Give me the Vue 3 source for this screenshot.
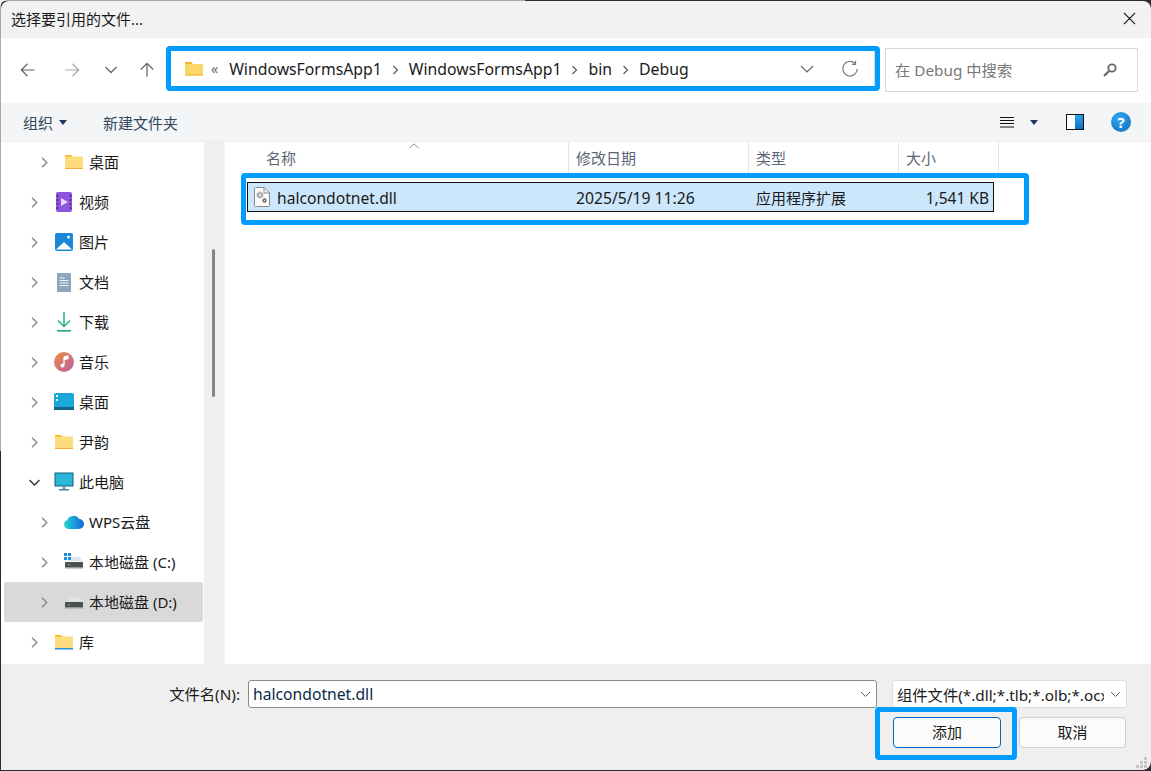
<template>
  <div class="dialog">
    <header class="titlebar">
      <span class="title">选择要引用的文件...</span>
      <svg class="close" width="13" height="13" viewBox="0 0 14 14"><path d="M1 1l12 12M13 1L1 13" stroke="#111" stroke-width="1.200" fill="none" /></svg>
    </header>

    <div class="navbar">
      <div class="nav-buttons">
        <svg width="16" height="16" viewBox="0 0 18 18"><path d="M16.500 9H1.500M8.500 2L1.500 9l7 7" stroke="#666" stroke-width="1.400" fill="none" /></svg>
        <svg width="16" height="16" viewBox="0 0 18 18"><path d="M1.500 9h15M9.500 2l7 7-7 7" stroke="#aaa" stroke-width="1.400" fill="none" /></svg>
        <svg width="14" height="16" viewBox="0 0 14 16"><path d="M1.500 5L7 10.500 12.500 5" stroke="#666" stroke-width="1.300" fill="none" /></svg>
        <svg width="16" height="16" viewBox="0 0 18 18"><path d="M9 16.500V1.500M2 8.500l7-7 7 7" stroke="#666" stroke-width="1.400" fill="none" /></svg>
      </div>
      <div class="address">
        <svg class="addr-folder" width="18" height="15" viewBox="0 0 18 15">
          <path d="M0 2a1 1 0 0 1 1-1h5l2 2h9a1 1 0 0 1 1 1v3H0z" fill="#f6b321" />
          <rect y="3" width="18" height="11.500" rx="1" fill="#fbd768" />
          <rect y="13.500" width="18" height="1" fill="#f2b130" />
        </svg>
        <span class="crumb-more">«</span>
        <template v-for="(c, i) in crumbs" :key="i">
          <span class="crumb">{{ c }}</span>
          <svg v-if="i < crumbs.length - 1" class="crumb-sep" width="7" height="10" viewBox="0 0 7 10"><path d="M1.500 1l4 4-4 4" stroke="#555" stroke-width="1.100" fill="none" /></svg>
        </template>
        <span class="spacer"></span>
        <svg class="addr-chevron" width="14" height="8" viewBox="0 0 14 8"><path d="M1 1l6 6 6-6" stroke="#666" stroke-width="1.200" fill="none" /></svg>
        <svg class="addr-refresh" width="18" height="18" viewBox="0 0 18 18"><path d="M13.800 3.200A7.300 7.300 0 1 0 16.300 9M14.500 0.800v3.500H11" stroke="#777" stroke-width="1.200" fill="none" /></svg>
      </div>
      <div class="search">
        <span class="search-text">在 Debug 中搜索</span>
        <svg width="16" height="16" viewBox="0 0 16 16"><circle cx="10" cy="6" r="3.700" stroke="#666" stroke-width="1.800" fill="none" /><path d="M7 9l-5 5" stroke="#666" stroke-width="2.200" /></svg>
      </div>
    </div>

    <div class="toolbar">
      <span class="tool">组织</span>
      <span class="tool-caret"></span>
      <span class="tool new-folder">新建文件夹</span>
      <span class="spacer"></span>
      <svg class="view-icon" width="14" height="13" viewBox="0 0 14 13"><path d="M0 1.500h14M0 4.500h14M0 7.500h14M0 11h14" stroke="#111" stroke-width="1" /></svg>
      <span class="tool-caret view-caret"></span>
      <span class="pane-icon"><i></i></span>
      <span class="help">?</span>
    </div>

    <div class="main">
      <aside class="sidebar">
        <div v-for="item in tree" :key="item.id" class="tree-row" :class="{ selected: item.selected, nested: item.nested }">
          <svg class="tree-arrow" width="11" height="11" viewBox="0 0 11 11">
            <path v-if="item.open" d="M0.500 3L5.500 8l5-5" stroke="#333" stroke-width="1.400" fill="none" />
            <path v-else d="M3 0.800L7.800 5.500 3 10.200" stroke="#888" stroke-width="1.400" fill="none" />
          </svg>
          <span class="tree-icon">
            <svg width="20" height="20" viewBox="0 0 20 20">
              <template v-if="item.icon === 'folder'">
                <path d="M1 4a1 1 0 0 1 1-1h5l2 2h9v3H1z" fill="#f6b321" />
                <rect x="1" y="4.500" width="18" height="12.500" rx="1" fill="#fcdc7c" />
                <rect x="1" y="16" width="18" height="1" fill="#f2b130" />
              </template>
              <template v-if="item.icon === 'library'">
                <path d="M1 4a1 1 0 0 1 1-1h5l2 2h9v3H1z" fill="#f6b321" />
                <rect x="1" y="4.500" width="18" height="12.500" rx="1" fill="#fcdc7c" />
                <rect x="1" y="16" width="18" height="1.500" fill="#2b8fd6" />
              </template>
              <template v-if="item.icon === 'video'">
                <rect x="2" y="0" width="16" height="20" rx="2" fill="#8f55dc" />
                <path d="M7 6l7 4-7 4z" fill="#e6d8fb" />
                <path d="M3.500 3v14M16.500 3v14" stroke="#4b2a8c" stroke-width="1.500" stroke-dasharray="2 2" />
              </template>
              <template v-if="item.icon === 'picture'">
                <rect x="1" y="1" width="18" height="18" rx="2" fill="#1a87d8" />
                <path d="M2 17.500L10 10l8 7.500z" fill="#fff" />
                <circle cx="14.500" cy="5" r="1.500" fill="#fff" />
              </template>
              <template v-if="item.icon === 'doc'">
                <rect x="3" y="1" width="14" height="19" rx="1" fill="#8ca6c2" />
                <path d="M5.500 6h5M5.500 8.500h9M5.500 11h9M5.500 13.500h9" stroke="#eef3f8" stroke-width="1" />
              </template>
              <template v-if="item.icon === 'download'">
                <path d="M10 0v14.500M4 8.500l6 6 6-6" stroke="#25b090" stroke-width="1.500" fill="none" />
                <rect x="3" y="18" width="14" height="1.600" fill="#1fa78c" />
              </template>
              <template v-if="item.icon === 'music'">
                <defs><linearGradient id="mus" x1="0" y1="0" x2="1" y2="1"><stop offset="0" stop-color="#ee8a3e" /><stop offset="1" stop-color="#b862a8" /></linearGradient></defs>
                <circle cx="10" cy="10" r="10" fill="url(#mus)" />
                <path d="M10 5v8M10 5l4-1v2.500l-4 1" stroke="#fff" stroke-width="1.300" fill="#fff" />
                <circle cx="8.500" cy="13.500" r="2" fill="#fff" />
              </template>
              <template v-if="item.icon === 'desktop'">
                <rect x="0" y="1" width="20" height="17" rx="2" fill="#1ba7d9" />
                <rect x="0" y="15" width="20" height="3" fill="#14638c" />
                <rect x="2" y="3" width="2" height="2" fill="#fff" />
                <rect x="2" y="7" width="2" height="2" fill="#cdeaf7" />
              </template>
              <template v-if="item.icon === 'pc'">
                <rect x="1" y="1" width="18" height="13" fill="#2ab6d6" stroke="#14607e" stroke-width="1" />
                <rect x="8.500" y="14" width="3" height="3" fill="#7a9db2" />
                <rect x="5" y="17" width="10" height="1.500" fill="#4f7d96" />
              </template>
              <template v-if="item.icon === 'cloud'">
                <defs><linearGradient id="cld" x1="0" y1="0" x2="1" y2="0"><stop offset="0" stop-color="#22d4d0" /><stop offset="1" stop-color="#1466e0" /></linearGradient></defs>
                <path d="M4.500 17a4.500 4.500 0 0 1-1.200-8.800A6.500 6.500 0 0 1 15 7a5 5 0 0 1 0 10z" fill="url(#cld)" />
              </template>
              <template v-if="item.icon === 'diskc' || item.icon === 'diskd'">
                <path d="M4 9l3-4h8l4 4.500z" fill="#dde3ea" />
                <rect x="1" y="10" width="18" height="6" rx="1" fill="#4e4e4e" />
                <rect x="1" y="15" width="18" height="1.500" fill="#9a9a9a" />
                <rect x="4" y="12" width="1.500" height="1.500" fill="#3fd04e" />
              </template>
              <template v-if="item.icon === 'diskc'">
                <rect x="0" y="1" width="3" height="3" fill="#1d8fdc" />
                <rect x="4" y="1" width="3" height="3" fill="#1d8fdc" />
                <rect x="0" y="5" width="3" height="3" fill="#1d8fdc" />
                <rect x="4" y="5" width="3" height="3" fill="#1d8fdc" />
              </template>
            </svg>
          </span>
          <span class="tree-label">{{ item.label }}</span>
        </div>
      </aside>

      <div class="scrollbar"><span class="thumb"></span></div>

      <section class="list">
        <div class="list-head">
          <div v-for="col in columns" :key="col.label" class="head-cell" :class="col.cls">{{ col.label }}</div>
          <svg class="sort-arrow" width="10" height="6" viewBox="0 0 10 6"><path d="M0.500 5L5 0.800 9.500 5" stroke="#888" stroke-width="1" fill="none" /></svg>
        </div>
        <div class="file-row">
          <span class="cell name">
            <svg width="16" height="20" viewBox="0 0 16 20">
              <path d="M0.500 1.500a1 1 0 0 1 1-1H10l5.500 5.500v12.500a1 1 0 0 1-1 1h-13a1 1 0 0 1-1-1z" fill="#fbfbfb" stroke="#8a8a8a" />
              <path d="M10 0.500V6h5.500" fill="none" stroke="#8a8a8a" />
              <circle cx="6" cy="8" r="2" fill="none" stroke="#a9aeb3" stroke-width="2" />
              <circle cx="6" cy="8" r="3.200" fill="none" stroke="#a9aeb3" stroke-width="1" stroke-dasharray="1.500 1" />
              <circle cx="10.500" cy="13.500" r="1.400" fill="none" stroke="#6d7277" stroke-width="1.600" />
            </svg>
            <span class="file-name">halcondotnet.dll</span>
          </span>
          <span class="cell date">2025/5/19 11:26</span>
          <span class="cell type">应用程序扩展</span>
          <span class="cell size">1,541 KB</span>
        </div>
      </section>
    </div>

    <footer class="footer">
      <div class="footer-row">
        <label class="file-label">文件名(N):</label>
        <div class="name-input">
          <span>halcondotnet.dll</span>
          <svg width="11" height="7" viewBox="0 0 11 7"><path d="M1 1l4.500 4.500L10 1" stroke="#666" stroke-width="1" fill="none" /></svg>
        </div>
        <div class="type-select">
          <span>组件文件(*.dll;*.tlb;*.olb;*.ocx</span>
          <svg width="11" height="7" viewBox="0 0 11 7"><path d="M1 1l4.500 4.500L10 1" stroke="#666" stroke-width="1" fill="none" /></svg>
        </div>
      </div>
      <div class="footer-row buttons">
        <button class="btn primary">添加</button>
        <button class="btn">取消</button>
      </div>
    </footer>

    <svg class="grip" width="11" height="11" viewBox="0 0 11 11">
      <path d="M8 0h3v3H8zM4 4h3v3H4zM8 4h3v3H8zM0 8h3v3H0zM4 8h3v3H4zM8 8h3v3H8z" fill="#c6c6c6" />
    </svg>

    <!-- highlight boxes drawn on top of the screenshot -->
    <span class="mark mark-address"></span>
    <span class="mark mark-file"></span>
    <span class="mark mark-add"></span>
  </div>
</template>

<script setup>
const crumbs = ['WindowsFormsApp1', 'WindowsFormsApp1', 'bin', 'Debug']

const tree = [
  { id: 1, label: '桌面', icon: 'folder', nested: true },
  { id: 2, label: '视频', icon: 'video' },
  { id: 3, label: '图片', icon: 'picture' },
  { id: 4, label: '文档', icon: 'doc' },
  { id: 5, label: '下载', icon: 'download' },
  { id: 6, label: '音乐', icon: 'music' },
  { id: 7, label: '桌面', icon: 'desktop' },
  { id: 8, label: '尹韵', icon: 'folder' },
  { id: 9, label: '此电脑', icon: 'pc', open: true },
  { id: 10, label: 'WPS云盘', icon: 'cloud', nested: true },
  { id: 11, label: '本地磁盘 (C:)', icon: 'diskc', nested: true },
  { id: 12, label: '本地磁盘 (D:)', icon: 'diskd', nested: true, selected: true },
  { id: 13, label: '库', icon: 'library' }
]

const columns = [
  { label: '名称', cls: 'col-name' },
  { label: '修改日期', cls: 'col-date' },
  { label: '类型', cls: 'col-type' },
  { label: '大小', cls: 'col-size' }
]
</script>

<style>
html, body {
  margin: 0;
  background: linear-gradient(#f4f4f4, #f4f4f4) 0 0 / 20px 20px no-repeat, #2b2b2b;
}
</style>

<style scoped>
.dialog {
  position: relative;
  width: 1151px;
  height: 770px;
  box-sizing: border-box;
  display: flex;
  flex-direction: column;
  padding: 1px 0 0 1px;
  border-radius: 8px 8px 8px 0;
  overflow: hidden;
  /* the window edge is grey over one part and dark over the rest */
  background:
    linear-gradient(#a8a8a8, #a8a8a8) 0 0 / 525px 1px no-repeat,
    linear-gradient(#a8a8a8, #a8a8a8) 0 0 / 1px 451px no-repeat,
    #2b2b2b;
  color: #1a1a1a;
  font-family: "Noto Sans", "Noto Sans CJK SC", sans-serif;
  font-size: 15px;
}

.spacer { flex: 1; }

.titlebar {
  height: 37px;
  flex: none;
  box-sizing: border-box;
  display: flex;
  align-items: center;
  justify-content: space-between;
  padding: 0 15px 2px 10px;
  background: #f2f2f2;
  border-radius: 8px 8px 0 0;
}

.navbar {
  height: 65px;
  flex: none;
  box-sizing: border-box;
  display: flex;
  align-items: center;
  background: #fff;
  padding: 0 13px 2px 19px;
}
.nav-buttons {
  width: 150px;
  display: flex;
  align-items: center;
  gap: 28px;
}
.nav-buttons svg:nth-child(3) { margin-left: -4px; }
.nav-buttons svg:nth-child(4) { margin-left: -7px; }

.address {
  width: 705px;
  height: 42px;
  box-sizing: border-box;
  display: flex;
  align-items: center;
  border: 1px solid #d9d9d9;
  padding: 0 15px 2px 14px;
  margin-right: 10px;
}
.addr-folder { margin-right: 8px; }
.crumb-more { color: #666; font-size: 14px; margin-right: 11px; }
.crumb { font-size: 15.800px; }
.crumb-sep { margin: 2px 10px 0; }
.addr-chevron { margin-right: 27px; }

.search {
  width: 253px;
  height: 44px;
  box-sizing: border-box;
  border: 1px solid #d9d9d9;
  display: flex;
  align-items: center;
  justify-content: space-between;
  padding: 0 19px 0 9px;
  color: #777;
  font-size: 15.300px;
}
.search-text { margin-bottom: 2px; }

.toolbar {
  height: 38px;
  flex: none;
  display: flex;
  align-items: center;
  background: #f4f5f7;
  padding: 0 20px 0 22px;
}
.tool { color: #33475f; }
.tool-caret {
  width: 0;
  height: 0;
  margin-left: 6px;
  border: 4px solid transparent;
  border-top: 5px solid #1f3a5f;
  border-bottom: 0;
}
.new-folder { margin-left: 36px; }
.view-caret { margin-left: 16px; margin-right: 28px; }
.pane-icon {
  width: 18px;
  height: 16px;
  box-sizing: border-box;
  border: 1px solid #111;
  background: #fff;
  display: flex;
  justify-content: flex-end;
}
.pane-icon i {
  width: 8px;
  background: linear-gradient(#27a6e8, #0f6fc2);
}
.help {
  width: 20px;
  height: 20px;
  margin-left: 27px;
  border-radius: 50%;
  background: radial-gradient(circle at 40% 30%, #35a6ec, #0b6cc0);
  color: #fff;
  font-size: 15px;
  font-weight: 700;
  line-height: 20px;
  text-align: center;
}

.main {
  flex: 1;
  min-height: 0;
  display: flex;
  background: #fff;
  border-top: 1px solid #ececec;
}
.sidebar {
  width: 203px;
  flex: none;
  background: #fff;
  overflow: hidden;
}
.tree-row {
  height: 40px;
  box-sizing: border-box;
  display: flex;
  align-items: center;
  margin: 0 1px 0 3px;
  padding-left: 25px;
  border-radius: 2px;
}
.tree-row.nested { padding-left: 35px; }
.tree-row.selected { background: #d9d9d9; }
.tree-arrow { flex: none; margin-right: -1px; }
.tree-icon {
  width: 20px;
  height: 20px;
  flex: none;
  margin-left: 15px;
}
.tree-label {
  margin: 0 0 2px 5px;
  white-space: nowrap;
}

.scrollbar {
  width: 20px;
  flex: none;
  background: #efefef;
  position: relative;
}
.thumb {
  position: absolute;
  left: 8px;
  top: 107px;
  width: 3px;
  height: 148px;
  border-radius: 2px;
  background: #868686;
}

.list {
  flex: 1;
  min-width: 0;
  border-left: 1px solid #f2f2f2;
}
.list-head {
  position: relative;
  height: 33px;
  display: flex;
  color: #5b6675;
}
.head-cell {
  box-sizing: border-box;
  padding-left: 7px;
  line-height: 32px;
  border-right: 1px solid #e5e5e5;
}
.col-name { width: 344px; padding-left: 41px; }
.col-date { width: 180px; }
.col-type { width: 150px; }
.col-size { width: 100px; }
.sort-arrow {
  position: absolute;
  left: 184px;
  top: 1px;
}

.file-row {
  width: 747px;
  height: 30px;
  box-sizing: border-box;
  margin: 7px 0 0 22px;
  display: flex;
  align-items: center;
  border: 1px solid #111;
  background: #cce6fb;
}
.cell { white-space: nowrap; }
.name {
  width: 328px;
  display: flex;
  align-items: center;
  gap: 7px;
  padding-left: 6px;
  box-sizing: border-box;
  font-size: 15.650px;
}
.file-name { margin-top: 2px; }
.date { width: 180px; font-size: 15.700px; margin-top: 2px; }
.type { width: 141px; }
.size { width: 92px; text-align: right; font-size: 15.500px; margin-top: 2px; }

.footer {
  height: 106px;
  flex: none;
  box-sizing: border-box;
  padding: 15px 24px 0 0;
  background: #efefef;
  border-top: 1px solid #eaeaea;
  border-radius: 0 0 8px 0;
}
.footer-row {
  display: flex;
  align-items: center;
  justify-content: flex-end;
}
.file-label { margin: 0 8px 2px 0; font-size: 15.300px; }
.name-input {
  width: 629px;
  height: 28px;
  box-sizing: border-box;
  border: 1px solid #8a8a8a;
  border-radius: 3px;
  background: #fff;
  display: flex;
  align-items: center;
  justify-content: space-between;
  padding: 0 5px 0 4px;
  color: #0b2a4a;
  font-size: 15.700px;
  margin-right: 15px;
}
.name-input span { margin-bottom: 1px; }
.type-select {
  width: 235px;
  height: 28px;
  box-sizing: border-box;
  border: 1px solid #dcdcdc;
  border-radius: 3px;
  background: #fff;
  display: flex;
  align-items: center;
  justify-content: space-between;
  padding: 0 5px 0 4px;
  overflow: hidden;
}
.type-select span {
  width: 207px;
  margin-bottom: 1px;
  overflow: hidden;
  white-space: nowrap;
  font-size: 15.300px;
}
.buttons {
  margin: 9px 1px 0 0;
  gap: 18px;
}
.btn {
  width: 108px;
  height: 31px;
  box-sizing: border-box;
  border: 1px solid #d0d0d0;
  border-radius: 4px;
  background: #fbfbfb;
  color: #1a1a1a;
  font: inherit;
  padding: 0 0 2px;
}
.btn + .btn { width: 107px; }
.btn.primary { border-color: #0067c0; }

.grip {
  position: absolute;
  left: 1136px;
  top: 757px;
}

.mark {
  position: absolute;
  box-sizing: border-box;
  border: 5px solid #009cff;
  border-radius: 4px;
  pointer-events: none;
}
.mark-address { left: 166px; top: 46px; width: 714px; height: 45px; }
.mark-file { left: 241px; top: 173px; width: 788px; height: 52px; }
.mark-add { left: 875px; top: 707px; width: 142px; height: 53px; }
</style>
